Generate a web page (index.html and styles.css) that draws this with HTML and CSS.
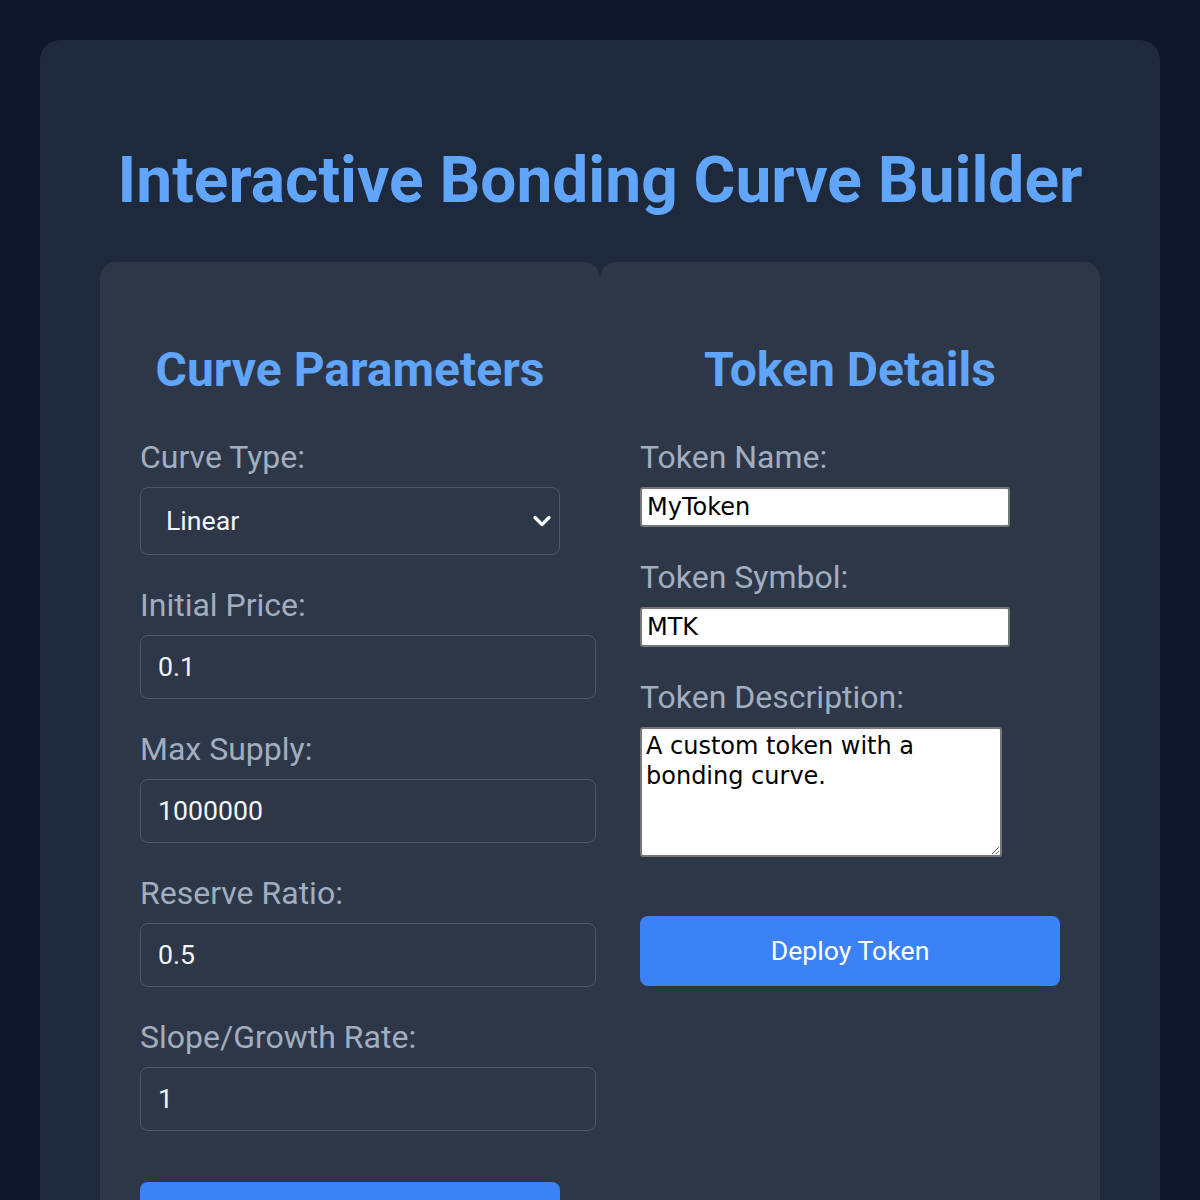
FILE: index.html
```html
<!DOCTYPE html>
<html lang="en">
<head>
<meta charset="utf-8">
<title>Interactive Bonding Curve Builder</title>
<link rel="stylesheet" href="styles.css">
</head>
<body>
<div class="container">
  <h1 class="title">Interactive Bonding Curve Builder</h1>
  <div class="panels">
    <section class="panel">
      <h2 class="panel-title">Curve Parameters</h2>
      <div class="group">
        <label class="label" for="curveType">Curve Type:</label>
        <div class="select-wrap">
          <select id="curveType" class="select">
            <option>Linear</option>
            <option>Exponential</option>
            <option>Logarithmic</option>
          </select>
          <svg class="chevron" width="20" height="14" viewBox="0 0 20 14" aria-hidden="true"><path d="M3 3.5 L10 10.5 L17 3.5" fill="none" stroke="#ffffff" stroke-width="3.2" stroke-linecap="round" stroke-linejoin="round"/></svg>
        </div>
      </div>
      <div class="group">
        <label class="label" for="initialPrice">Initial Price:</label>
        <input id="initialPrice" class="field" type="text" value="0.1">
      </div>
      <div class="group">
        <label class="label" for="maxSupply">Max Supply:</label>
        <input id="maxSupply" class="field" type="text" value="1000000">
      </div>
      <div class="group">
        <label class="label" for="reserveRatio">Reserve Ratio:</label>
        <input id="reserveRatio" class="field" type="text" value="0.5">
      </div>
      <div class="group">
        <label class="label" for="slope">Slope/Growth Rate:</label>
        <input id="slope" class="field" type="text" value="1">
      </div>
      <button class="btn">Update Curve</button>
    </section>
    <section class="panel">
      <h2 class="panel-title">Token Details</h2>
      <div class="group">
        <label class="label" for="tokenName">Token Name:</label>
        <input id="tokenName" class="plain" type="text" value="MyToken">
      </div>
      <div class="group">
        <label class="label" for="tokenSymbol">Token Symbol:</label>
        <input id="tokenSymbol" class="plain" type="text" value="MTK">
      </div>
      <div class="group group-area">
        <label class="label" for="tokenDesc">Token Description:</label>
        <textarea id="tokenDesc" class="plain-area">A custom token with a bonding curve.</textarea>
      </div>
      <button class="btn">Deploy Token</button>
    </section>
  </div>
</div>
</body>
</html>
```
FILE: styles.css
```css
html, body {
  margin: 0;
  padding: 0;
}
body {
  background: #0f172a;
  font-family: Roboto, "Liberation Sans", Arial, sans-serif;
  color: #e2e8f0;
  padding: 40px;
  min-height: 1200px;
  box-sizing: border-box;
}
.container {
  background: #1e293b;
  border-radius: 20px;
  padding: 0 60px 60px;
  overflow: hidden;
  display: flow-root;
}
.title {
  font-size: 64px;
  font-weight: 700;
  color: #60a5fa;
  text-align: center;
  margin: 103px 0 44px;
  line-height: 75px;
}
.panels {
  display: flex;
}
.panel {
  flex: 1;
  background: #2d3748;
  border-radius: 16px;
  padding: 40px;
  min-width: 0;
}
.panel-title {
  font-size: 48px;
  font-weight: 700;
  color: #60a5fa;
  text-align: center;
  margin: 40px 0 41px;
  line-height: 56px;
}
.group {
  margin-bottom: 32px;
}
.group-area {
  margin-bottom: 59px;
}
.label {
  display: block;
  font-size: 32px;
  line-height: 37.5px;
  color: #a0aec0;
  margin-bottom: 10.5px;
}
.select-wrap {
  position: relative;
  width: 420px;
}
.select {
  appearance: none;
  -webkit-appearance: none;
  display: block;
  width: 420px;
  height: 68px;
  box-sizing: border-box;
  background: #2d3748;
  border: 1px solid #4a5568;
  border-radius: 8px;
  color: #f1f5f9;
  font-family: Roboto, "Liberation Sans", Arial, sans-serif;
  font-size: 26.67px;
  padding: 0 40px 0 25px;
  margin: 0;
}
.chevron {
  position: absolute;
  right: 8px;
  top: 27px;
  pointer-events: none;
}
.field {
  display: block;
  width: 100%;
  box-sizing: content-box;
  background: #2d3748;
  border: 1px solid #4a5568;
  border-radius: 8px;
  color: #f1f5f9;
  font-family: Roboto, "Liberation Sans", Arial, sans-serif;
  font-size: 26.67px;
  line-height: 30px;
  height: 30px;
  padding: 16px 17px 16px 17px;
  margin: 0;
  outline: none;
}
.plain {
  display: block;
  width: 370px;
  height: 40px;
  box-sizing: border-box;
  background: #ffffff;
  border: 2px solid #767676;
  border-radius: 3px;
  color: #000000;
  font-family: "DejaVu Sans", sans-serif;
  font-size: 24px;
  padding: 0 5px;
  margin: 0;
}
.plain-area {
  display: block;
  width: 362px;
  height: 130px;
  box-sizing: border-box;
  background: #ffffff;
  border: 2px solid #767676;
  border-radius: 3px;
  color: #000000;
  font-family: "DejaVu Sans", sans-serif;
  font-size: 24px;
  line-height: 30px;
  padding: 2px 4px;
  margin: 0;
}
.btn {
  display: block;
  width: 420px;
  height: 70px;
  margin-top: 51px;
  background: #3b82f6;
  color: #ffffff;
  border: none;
  border-radius: 8px;
  font-family: Roboto, "Liberation Sans", Arial, sans-serif;
  font-size: 26.67px;
  cursor: pointer;
}
```
